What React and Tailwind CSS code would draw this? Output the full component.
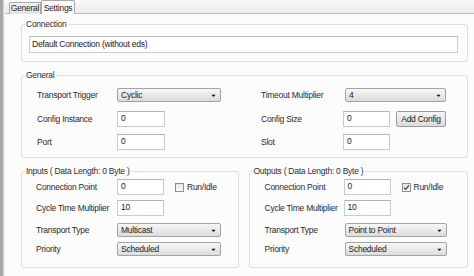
import { FaCaretDown } from "react-icons/fa";

function Select({ value, width = "w-[104px]" }) {
  return (
    <div
      className={`${width} h-[14px] flex items-center justify-between border border-[#a3a3a3] rounded-[2px] bg-gradient-to-b from-[#f7f7f7] to-[#dcdcdc] pl-[3px] pr-[3px] text-[#1a1a1a]`}
    >
      <span className="leading-none">{value}</span>
      <FaCaretDown className="w-[7px] h-[7px] text-[#111]" />
    </div>
  );
}

function TextBox({ value, width = "w-[48px]" }) {
  return (
    <div
      className={`${width} h-[16px] border border-[#cacaca] border-t-[#b4b4b4] bg-white pl-[3px] pt-[2px] leading-none text-[#1a1a1a]`}
    >
      {value}
    </div>
  );
}

function CheckBox({ checked, label }) {
  return (
    <div className="flex items-center gap-[3px] ml-[11px]">
      <div className="w-[9px] h-[9px] border border-[#8e8e8e] bg-gradient-to-b from-[#e6e6e6] to-[#fafafa] flex items-center justify-center">
        {checked && (
          <svg viewBox="0 0 10 10" className="w-[7px] h-[7px]">
            <path
              d="M1.5 5.2 L4 7.8 L8.5 2"
              fill="none"
              stroke="#2b3a55"
              strokeWidth="1.6"
            />
          </svg>
        )}
      </div>
      <span>{label}</span>
    </div>
  );
}

function Group({ title, className = "", children }) {
  return (
    <fieldset
      className={`border border-[#dedede] rounded-[3px] pl-[3px] ${className}`}
    >
      <legend className="px-[1px] leading-[10px] text-[#2e2e2e]">{title}</legend>
      {children}
    </fieldset>
  );
}

export default function App() {
  return (
    <div
      className="w-[474px] h-[276px] flex bg-[#fcfcfc] text-[8.5px] tracking-[-0.25px] text-[#2a2a2a] overflow-hidden"
      style={{ fontFamily: '"Liberation Sans", Arial, sans-serif' }}
    >
      {/* left window edge */}
      <div className="w-[4px] bg-[#a7a7a7] border-r border-[#d6d6d6]" />
      <div className="w-[1px] bg-[#f2f2f2]" />

      <div className="flex-1 flex flex-col">
        {/* Tabs */}
        <div className="h-[14px] flex items-end pl-[4px] bg-gradient-to-b from-[#fafafa] to-[#ebebeb] border-b border-[#bababa]">
          <div className="w-[32px] h-[12px] border border-b-0 border-[#a9a9a9] bg-gradient-to-b from-[#f3f3f3] to-[#e3e3e3] flex items-center justify-center text-[#1e1e1e] -mb-[1px] rounded-tl-[2px]">
            General
          </div>
          <div className="w-[34px] h-[14px] border border-b-0 border-[#a9a9a9] bg-[#fcfcfc] flex items-start pt-[1px] justify-center text-[#1e1e1e] -mb-[1px] rounded-t-[2px] relative z-10">
            Settings
          </div>
        </div>

        {/* Content */}
        <div className="flex flex-col pl-[16px] w-[463px]">
          <Group title="Connection" className="mt-[5px] pb-[8px]">
            <div className="ml-[4px] mt-[7px] w-[429px] h-[17px] border border-[#cccccc] border-t-[#b8b8b8] bg-white pl-[2px] flex items-center text-[#1a1a1a]">
              Default Connection (without eds)
            </div>
          </Group>

          <Group title="General" className="mt-[8px] pb-[7px]">
            <div className="flex items-center mt-[8px] ml-[12px]">
              <span className="w-[80px]">Transport Trigger</span>
              <div className="w-[144px]">
                <Select value="Cyclic" />
              </div>
              <span className="w-[84px]">Timeout Multiplier</span>
              <Select value="4" width="w-[101px]" />
            </div>
            <div className="flex items-center mt-[9px] ml-[12px]">
              <span className="w-[80px]">Config Instance</span>
              <div className="w-[144px]">
                <TextBox value="0" />
              </div>
              <span className="w-[82px]">Config Size</span>
              <TextBox value="0" width="w-[47px]" />
              <div className="ml-[6px] w-[50px] h-[16px] border border-[#9c9c9c] rounded-[2px] bg-gradient-to-b from-[#f6f6f6] to-[#dcdcdc] flex items-center justify-center text-[#1a1a1a]">
                Add Config
              </div>
            </div>
            <div className="flex items-center mt-[7px] ml-[12px]">
              <span className="w-[80px]">Port</span>
              <div className="w-[144px]">
                <TextBox value="0" />
              </div>
              <span className="w-[82px]">Slot</span>
              <TextBox value="0" width="w-[47px]" />
            </div>
          </Group>

          <div className="flex gap-[10px] mt-[8px]">
            <Group
              title="Inputs ( Data Length: 0 Byte )"
              className="w-[218px] pb-[11px]"
            >
              <div className="flex items-center mt-[3px] ml-[11px]">
                <span className="w-[81px]">Connection Point</span>
                <TextBox value="0" width="w-[47px]" />
                <CheckBox label="Run/Idle" />
              </div>
              <div className="flex items-center mt-[5px] ml-[11px]">
                <span className="w-[81px]">Cycle Time Multiplier</span>
                <TextBox value="10" width="w-[47px]" />
              </div>
              <div className="flex items-center mt-[7px] ml-[11px]">
                <span className="w-[81px]">Transport Type</span>
                <Select value="Multicast" />
              </div>
              <div className="flex items-center mt-[5px] ml-[11px]">
                <span className="w-[81px]">Priority</span>
                <Select value="Scheduled" />
              </div>
            </Group>

            <Group
              title="Outputs ( Data Length: 0 Byte )"
              className="w-[220px] pb-[11px]"
            >
              <div className="flex items-center mt-[3px] ml-[12px]">
                <span className="w-[79px]">Connection Point</span>
                <TextBox value="0" width="w-[47px]" />
                <CheckBox checked label="Run/Idle" />
              </div>
              <div className="flex items-center mt-[5px] ml-[12px]">
                <span className="w-[79px]">Cycle Time Multiplier</span>
                <TextBox value="10" width="w-[47px]" />
              </div>
              <div className="flex items-center mt-[7px] ml-[12px]">
                <span className="w-[80px]">Transport Type</span>
                <Select value="Point to Point" width="w-[102px]" />
              </div>
              <div className="flex items-center mt-[5px] ml-[12px]">
                <span className="w-[80px]">Priority</span>
                <Select value="Scheduled" width="w-[102px]" />
              </div>
            </Group>
          </div>
        </div>
      </div>
    </div>
  );
}
